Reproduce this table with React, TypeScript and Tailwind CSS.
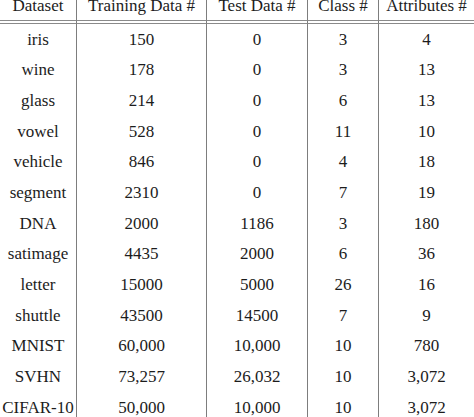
const header = ["Dataset", "Training Data #", "Test Data #", "Class #", "Attributes #"];

const rows: string[][] = [
  ["iris", "150", "0", "3", "4"],
  ["wine", "178", "0", "3", "13"],
  ["glass", "214", "0", "6", "13"],
  ["vowel", "528", "0", "11", "10"],
  ["vehicle", "846", "0", "4", "18"],
  ["segment", "2310", "0", "7", "19"],
  ["DNA", "2000", "1186", "3", "180"],
  ["satimage", "4435", "2000", "6", "36"],
  ["letter", "15000", "5000", "26", "16"],
  ["shuttle", "43500", "14500", "7", "9"],
  ["MNIST", "60,000", "10,000", "10", "780"],
  ["SVHN", "73,257", "26,032", "10", "3,072"],
  ["CIFAR-10", "50,000", "10,000", "10", "3,072"],
];

const sep = (i: number) => (i < 4 ? "border-r border-[#7d7d7d]" : "");

export default function App() {
  return (
    <div
      className="w-[474px] h-[417px] overflow-hidden bg-white text-[#1c1c1c] text-[17px]"
      style={{ fontFamily: '"Liberation Serif", serif' }}
    >
      <div className="grid grid-cols-[77px_130px_101px_71px_95px]">
        {header.map((h, i) => (
          <div key={h} className={`h-[20px] flex justify-center items-start leading-[12px] whitespace-nowrap ${sep(i)}`}>
            {h}
          </div>
        ))}
        {header.map((h, i) => (
          <div key={"l" + h} className={`h-[4px] border-y border-y-[#8a8a8a] ${sep(i)}`} />
        ))}
        {rows.map((r) =>
          r.map((c, i) => (
            <div
              key={r[0] + i}
              className={`h-[30.67px] flex items-center justify-center leading-[17px] whitespace-nowrap ${sep(i)}`}
            >
              {c}
            </div>
          ))
        )}
      </div>
    </div>
  );
}
